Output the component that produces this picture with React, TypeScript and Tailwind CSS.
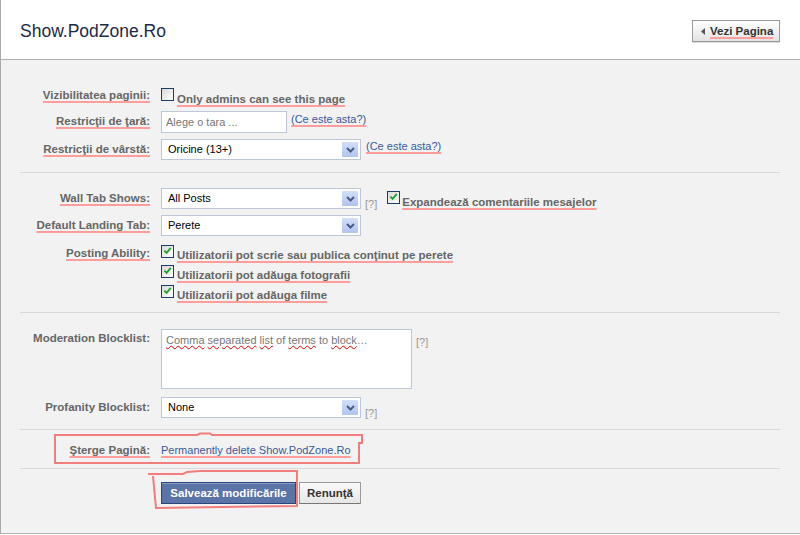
import React from 'react';

const ul =
  'underline decoration-[#ff9c9c] decoration-2 underline-offset-[2px] [text-decoration-skip-ink:none]';
const labelCls =
  'w-[130px] shrink-0 text-right font-bold text-[#666] text-[11.5px] leading-[14px]';

function Check({ checked }: { checked?: boolean }) {
  return (
    <span className="w-[13px] h-[13px] shrink-0 border border-[#1d3c6a] bg-gradient-to-br from-[#d9d9d9] to-white flex items-start justify-start">
      {checked && (
        <svg width="11" height="10" viewBox="0 0 11 10" className="ml-[1px]">
          <path d="M1.5 4.5 L4 7 L8.5 1.5" stroke="#1fa02a" strokeWidth="2" fill="none" />
        </svg>
      )}
    </span>
  );
}

function Select({ value }: { value: string }) {
  return (
    <div className="w-[200px] h-[21px] shrink-0 border border-[#bdc7d8] bg-white flex items-center justify-between pl-[6px] pr-[2px] text-[11px] text-black">
      <span>{value}</span>
      <span className="w-[16px] h-[15px] rounded-[1px] bg-gradient-to-b from-[#d3dff9] to-[#b1c4ee] flex items-center justify-center">
        <svg width="9" height="6" viewBox="0 0 9 6">
          <path d="M1 1 L4.5 4.5 L8 1" stroke="#4a5b80" strokeWidth="2" fill="none" />
        </svg>
      </span>
    </div>
  );
}

function Help() {
  return <span className="text-[11px] leading-[14px] text-[#999]">[?]</span>;
}

function Divider({ className }: { className: string }) {
  return <div className={`h-px bg-[#d8d8d8] ${className}`} />;
}

const wavy = 'underline decoration-wavy decoration-[#e00000] decoration-1 underline-offset-[1px]';

export default function App() {
  return (
    <div className="w-[800px] h-[535px] bg-white relative overflow-hidden font-['Liberation_Sans',Arial,sans-serif]">
      <div className="border-l border-[#a9a9a9] h-[534px] flex flex-col">
        <header className="h-[60px] shrink-0 border-b border-[#b1b1b1] flex items-start justify-between pl-[19px] pr-[20px]">
          <h1 className="mt-[21px] text-[17.5px] leading-[20px] text-[#1c2a47]">Show.PodZone.Ro</h1>
          <button className="mt-[20px] h-[22px] w-[88px] border border-[#999] bg-gradient-to-b from-white to-[#e3e3e3] shadow-[0_1px_0_#ddd] flex items-center pl-[8px]">
            <svg width="4" height="7" viewBox="0 0 4 7">
              <path d="M4 0 L0 3.5 L4 7 Z" fill="#555" />
            </svg>
            <span className={`ml-[5px] font-bold text-[11.5px] leading-[14px] text-[#333] ${ul}`}>Vezi Pagina</span>
          </button>
        </header>

        <main className="flex-1 bg-[#f2f2f2] border-b border-[#b4b4b4] pl-[19px] pr-[20px]">
          {/* visibility + restrictions */}
          <section className="pt-[28px]">
            <div className="flex h-[23px]">
              <span className={labelCls}>
                <span className={ul}>Vizibilitatea paginii:</span>
              </span>
              <div className="ml-[11px] flex items-start">
                <Check />
                <span className={`ml-[3px] mt-[4px] font-bold text-[#666] text-[11.5px] leading-[14px] ${ul}`}>
                  Only admins can see this page
                </span>
              </div>
            </div>
            <div className="flex items-start h-[28px]">
              <span className={`${labelCls} mt-[3px]`}>
                <span className={ul}>Restricţii de ţară:</span>
              </span>
              <div className="ml-[11px] w-[126px] h-[22px] border border-[#bdc7d8] bg-white pl-[4px] flex items-center text-[11px] text-[#777]">
                Alege o tara ...
              </div>
              <a className={`ml-[4px] mt-[1px] text-[11px] leading-[14px] text-[#3b5998] ${ul}`}>(Ce este asta?)</a>
            </div>
            <div className="flex items-start h-[21px]">
              <span className={`${labelCls} mt-[3px]`}>
                <span className={ul}>Restricţii de vârstă:</span>
              </span>
              <div className="ml-[11px]">
                <Select value="Oricine (13+)" />
              </div>
              <a className={`ml-[5px] mt-0 text-[11px] leading-[14px] text-[#3b5998] ${ul}`}>(Ce este asta?)</a>
            </div>
            <Divider className="mt-[12px]" />
          </section>

          {/* wall settings */}
          <section className="pt-[15px]">
            <div className="flex items-start h-[21px]">
              <span className={`${labelCls} mt-[3px]`}>
                <span className={ul}>Wall Tab Shows:</span>
              </span>
              <div className="ml-[11px]">
                <Select value="All Posts" />
              </div>
              <span className="ml-[4px] mt-[3px]">
                <Help />
              </span>
              <span className="ml-[10px] mt-[3px]">
                <Check checked />
              </span>
              <span className={`ml-[2px] mt-[7px] font-bold text-[#666] text-[11.5px] leading-[14px] ${ul}`}>
                Expandează comentariile mesajelor
              </span>
            </div>
            <div className="flex items-start h-[21px] mt-[6px]">
              <span className={`${labelCls} mt-[3px]`}>
                <span className={ul}>Default Landing Tab:</span>
              </span>
              <div className="ml-[11px]">
                <Select value="Perete" />
              </div>
            </div>
            <div className="flex items-start mt-[9px]">
              <span className={`${labelCls} mt-[1px]`}>
                <span className={ul}>Posting Ability:</span>
              </span>
              <div className="ml-[11px] flex flex-col">
                {[
                  'Utilizatorii pot scrie sau publica conţinut pe perete',
                  'Utilizatorii pot adăuga fotografii',
                  'Utilizatorii pot adăuga filme',
                ].map((t) => (
                  <div key={t} className="flex items-start h-[20px]">
                    <Check checked />
                    <span className={`ml-[3px] mt-[3px] font-bold text-[#666] text-[11.5px] leading-[14px] ${ul}`}>{t}</span>
                  </div>
                ))}
              </div>
            </div>
            <Divider className="mt-[7px]" />
          </section>

          {/* blocklists */}
          <section className="pt-[16px]">
            <div className="flex items-start">
              <span className={`${labelCls} mt-[2px]`}>Moderation Blocklist:</span>
              <div className="ml-[11px] w-[251px] h-[60px] border border-[#bdc7d8] bg-white pl-[4px] pt-[3px] text-[11px] leading-[14px] text-[#777]">
                <span className={wavy}>Comma</span> <span className={wavy}>separated</span>{' '}
                <span className={wavy}>list</span> of <span className={wavy}>terms</span> to{' '}
                <span className={wavy}>block</span>…
              </div>
              <span className="ml-[4px] mt-0">
                <Help />
              </span>
            </div>
            <div className="flex items-start h-[21px] mt-[8px]">
              <span className={`${labelCls} mt-[3px]`}>Profanity Blocklist:</span>
              <div className="ml-[11px]">
                <Select value="None" />
              </div>
              <span className="ml-[4px] mt-[3px]">
                <Help />
              </span>
            </div>
            <Divider className="mt-[11px]" />
          </section>

          {/* delete */}
          <section className="pt-[13px]">
            <div className="flex items-start">
              <span className={labelCls}>
                <span className={ul}>Şterge Pagină:</span>
              </span>
              <a className={`ml-[11px] text-[11px] leading-[14px] text-[#3b5998] ${ul}`}>
                Permanently delete Show.PodZone.Ro
              </a>
            </div>
            <Divider className="mt-[11px]" />
          </section>

          {/* actions */}
          <section className="pt-[13px] pl-[141px] flex">
            <button className="h-[22px] w-[135px] border border-[#29447e] bg-[#5b74a8] shadow-[inset_0_1px_0_#8a9cc2] text-white font-bold text-[11.5px] leading-[14px]">
              Salvează modificările
            </button>
            <button className="ml-[3px] h-[22px] w-[62px] border border-[#999] border-b-[#777] bg-gradient-to-b from-[#fafafa] to-[#e6e6e6] text-[#333] font-bold text-[11.5px] leading-[14px]">
              Renunţă
            </button>
          </section>
        </main>
      </div>

      {/* hand-drawn annotation marks */}
      <svg className="absolute inset-0 pointer-events-none" width="800" height="535" viewBox="0 0 800 535">
        <path
          d="M55 435 L197 435 L200 433.5 L210 433.5 L212 435 L362 435 L362 443 L359 443 L359 463 L55 463 Z"
          stroke="#f27d7d"
          strokeWidth="2"
          fill="none"
        />
        <path
          d="M148 474 L183 474 L187 472 L200 471 L297 471 L297 506 L156 508 L153 476"
          stroke="#f27d7d"
          strokeWidth="2"
          fill="none"
        />
      </svg>
    </div>
  );
}
